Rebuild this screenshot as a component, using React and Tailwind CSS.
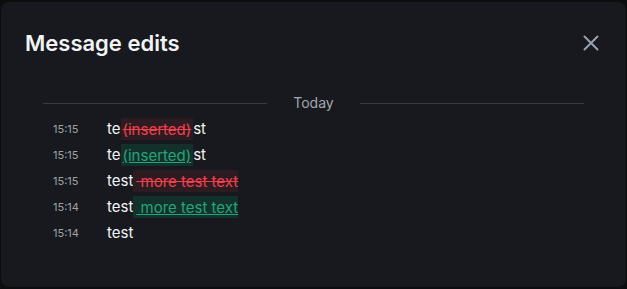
import React from "react";

const font = { fontFamily: "Inter, 'Noto Sans', sans-serif" };

function Del({ children, className = "" }) {
  return (
    <span className={"bg-[#2c1b20] text-[#f23f4e] line-through decoration-[#f23f4e] py-[1.5px] " + className}>{children}</span>
  );
}
function Ins({ children, className = "" }) {
  return (
    <span className={"bg-[#13302a] text-[#23a57c] underline decoration-[#23a57c] underline-offset-2 py-[1.5px] " + className}>{children}</span>
  );
}

function Row({ time, children }) {
  return (
    <div className="flex items-center h-[26px]">
      <div className="w-[54px] text-[11px] text-[#9ea2a9]">{time}</div>
      <div className="text-[15px] text-[#f2f3f5] leading-[20px] whitespace-pre">{children}</div>
    </div>
  );
}

export default function App() {
  return (
    <div className="w-[627px] h-[289px] bg-[#0c0d0f] pt-[2px] px-[1px] pb-[2px]" style={font}>
      <div className="h-full rounded-lg bg-[#17191e] flex flex-col">
        <div className="flex items-center justify-between pl-6 pr-[27px] pt-[27px]">
          <h1 className="text-[22px] leading-[28px] font-semibold text-[#f2f3f5]">Message edits</h1>
          <svg width="16" height="16" viewBox="0 0 16 16" className="text-[#9aa0ab]">
            <path d="M1.5 1.5 L14.5 14.5 M14.5 1.5 L1.5 14.5" stroke="currentColor" strokeWidth="2" strokeLinecap="round" />
          </svg>
        </div>
        <div className="px-[42px] mt-[36px]">
          <div className="flex items-center">
            <div className="flex-1 h-px bg-[#373a42]"></div>
            <div className="px-[26px] text-[14px] text-[#a3a7ae] leading-[20px]">Today</div>
            <div className="flex-1 h-px bg-[#373a42]"></div>
          </div>
          <div className="mt-[3px] pl-[10px]">
            <Row time="15:15">te<Del className="px-[2px]">(inserted)</Del>st</Row>
            <Row time="15:15">te<Ins className="px-[2px]">(inserted)</Ins>st</Row>
            <Row time="15:15">test<Del className="pl-[3px]"> more test text</Del></Row>
            <Row time="15:14">test<Ins className="pl-[3px]"> more test text</Ins></Row>
            <Row time="15:14">test</Row>
          </div>
        </div>
      </div>
    </div>
  );
}
